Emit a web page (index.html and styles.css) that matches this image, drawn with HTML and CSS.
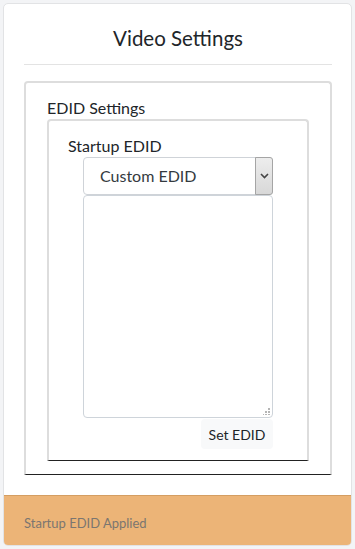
FILE: index.html
```html
<!DOCTYPE html>
<html>
<head>
<meta charset="utf-8">
<link rel="stylesheet" href="styles.css">
</head>
<body>
<div class="card">
  <div class="card-header">
    <h1 class="title">Video Settings</h1>
  </div>
  <div class="card-body">
    <div class="group outer">
      <div class="legend">EDID Settings</div>
      <div class="group inner">
        <div class="label">Startup EDID</div>
        <div class="controls">
          <div class="select">
            <span class="select-text">Custom EDID</span>
            <span class="select-btn">
              <svg width="9" height="6" viewBox="0 0 9 6"><path d="M1 1 L4.5 4.5 L8 1" fill="none" stroke="#444" stroke-width="1.6"/></svg>
            </span>
          </div>
          <div class="textarea">
            <svg class="grip" width="7" height="7" viewBox="0 0 7 7"><rect x="5" y="0" width="2" height="2" fill="#b5b5b5"/><rect x="2" y="3" width="2" height="2" fill="#b5b5b5"/><rect x="5" y="3" width="2" height="2" fill="#b5b5b5"/><rect x="-1" y="6" width="2" height="2" fill="#b5b5b5"/><rect x="2" y="6" width="2" height="2" fill="#b5b5b5"/><rect x="5" y="6" width="2" height="2" fill="#b5b5b5"/></svg>
          </div>
          <div class="actions">
            <button class="btn">Set EDID</button>
          </div>
        </div>
      </div>
    </div>
  </div>
  <div class="card-footer">Startup EDID Applied</div>
</div>
</body>
</html>
```
FILE: styles.css
```css
* { box-sizing: border-box; }
html, body { margin: 0; padding: 0; }
body {
  background: #f3f4f6;
  padding: 3px;
  font-family: "Lato", "Noto Sans", sans-serif;
  color: #212529;
}
.card {
  background: #fff;
  border: 1px solid #e2e3e5;
  border-radius: 5px;
  height: 543px;
  display: flex;
  flex-direction: column;
  overflow: hidden;
}
.card-header {
  margin: 0 19px 0 20px;
  border-bottom: 1px solid #e3e3e3;
  height: 61px;
  display: flex;
  align-items: center;
  justify-content: center;
  padding-top: 8px;
}
.title {
  margin: 0;
  font-weight: 400;
  font-size: 20.5px;
  line-height: 26px;
}
.card-body {
  flex: 1;
  padding: 16px 20px 0 20px;
}
.group {
  border: 2px solid #dddddd;
  border-bottom: 1px solid #222;
  border-radius: 4px 4px 0 0;
}
.outer {
  width: 308px;
  padding: 14px 21px 13px 21px;
}
.legend {
  font-size: 16px;
  line-height: 22px;
}
.inner {
  padding: 14px 0 11px 19px;
}
.label {
  font-size: 16px;
  line-height: 22px;
}
.controls {
  margin-left: 15px;
  width: 190px;
}
.select {
  height: 38px;
  border: 1px solid #cfd3d8;
  border-radius: 4px;
  display: flex;
  align-items: stretch;
  justify-content: space-between;
}
.select-text {
  font-size: 16px;
  line-height: 36px;
  padding-left: 16px;
  color: #343a40;
}
.select-btn {
  width: 18px;
  margin: -1px -1px -1px 0;
  border: 1px solid #a5a5a5;
  border-radius: 0 3px 3px 0;
  background: linear-gradient(#ededed, #d8d8d8);
  display: flex;
  align-items: center;
  justify-content: center;
}
.textarea {
  position: relative;
  height: 223px;
  border: 1px solid #ced4da;
  border-radius: 4px;
}
.grip {
  position: absolute;
  right: 2px;
  bottom: 2px;
}
.actions {
  display: flex;
  justify-content: flex-end;
}
.btn {
  font-family: inherit;
  font-size: 14px;
  color: #212529;
  background: #f8f9fa;
  border: none;
  border-radius: 4px;
  height: 30px;
  width: 72px;
  padding: 0;
  margin-top: 1px;
}
.card-footer {
  height: 50px;
  background: #ecb477;
  border-top: 1px solid #d49e62;
  padding: 5px 20px 0;
  display: flex;
  align-items: center;
  font-size: 13px;
  color: #7b7670;
}
```
